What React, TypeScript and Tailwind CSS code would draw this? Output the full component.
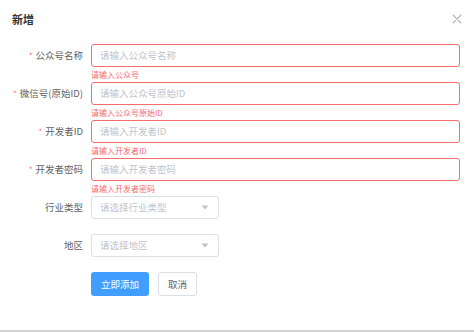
import React from 'react';

type Field = {
  label: string;
  required?: boolean;
  placeholder: string;
  error?: string;
  select?: boolean;
};

const FIELDS: Field[] = [
  { label: '公众号名称', required: true, placeholder: '请输入公众号名称', error: '请输入公众号' },
  { label: '微信号(原始ID)', required: true, placeholder: '请输入公众号原始ID', error: '请输入公众号原始ID' },
  { label: '开发者ID', required: true, placeholder: '请输入开发者ID', error: '请输入开发者ID' },
  { label: '开发者密码', required: true, placeholder: '请输入开发者密码', error: '请输入开发者密码' },
  { label: '行业类型', placeholder: '请选择行业类型', select: true },
  { label: '地区', placeholder: '请选择地区', select: true },
];

const CloseIcon = () => (
  <svg width="10" height="10" viewBox="0 0 10 10" className="text-[#b4b6bb]">
    <path d="M1 1L9 9M9 1L1 9" stroke="currentColor" strokeWidth="1.1" strokeLinecap="round" />
  </svg>
);

const FormRow: React.FC<{ field: Field }> = ({ field }) => (
  <div className="flex flex-col">
    <div className="flex items-center">
      <label className="w-[79px] shrink-0 pr-2 text-right text-[9.5px] text-[#606266] leading-none">
        {field.required && <span className="text-[#f56c6c] mr-[3px] text-[8px]">*</span>}
        {field.label}
      </label>
      {field.select ? (
        <div className="w-[128px] h-[23px] flex items-center justify-between rounded-[3px] border border-[#dcdfe6] pl-2 pr-[9px]">
          <span className="text-[9.5px] text-[#c0c4cc] leading-none">{field.placeholder}</span>
          <svg width="8" height="5" viewBox="0 0 8 5">
            <path d="M0.5 0.5H7.5L4 4.5Z" fill="#c0c4cc" />
          </svg>
        </div>
      ) : (
        <div className="flex-1 h-[23px] flex items-center rounded-[3px] border border-[#f56c6c] pl-2">
          <span className="text-[9.5px] text-[#c0c4cc] leading-none">{field.placeholder}</span>
        </div>
      )}
    </div>
    <div className="h-[15px] pl-[79px] flex items-center">
      {field.error && <span className="text-[8px] text-[#f56c6c] leading-none">{field.error}</span>}
    </div>
  </div>
);

export default function App() {
  return (
    <div
      className="w-[474px] h-[332px] flex flex-col bg-white"
      style={{ fontFamily: '"Noto Sans CJK SC", "Liberation Sans", sans-serif' }}
    >
      <div className="flex-1 flex flex-col">
        <div className="h-[38px] flex items-center justify-between pl-3 pr-[12px]">
          <span className="text-[11px] font-bold text-[#303133]">新增</span>
          <CloseIcon />
        </div>
        <div className="mt-[6px] pl-[12px] pr-[14px] flex flex-col">
          {FIELDS.map((f) => (
            <FormRow key={f.label} field={f} />
          ))}
          <div className="flex gap-[9px] pl-[79px]">
            <button className="h-[24px] w-[58px] rounded-[3px] bg-[#409eff] text-white text-[9.5px]">立即添加</button>
            <button className="h-[24px] w-[39px] rounded-[3px] border border-[#dcdfe6] bg-white text-[#606266] text-[9.5px]">
              取消
            </button>
          </div>
        </div>
      </div>
      <div className="h-[2px] bg-[#d4d4d4]" />
    </div>
  );
}
